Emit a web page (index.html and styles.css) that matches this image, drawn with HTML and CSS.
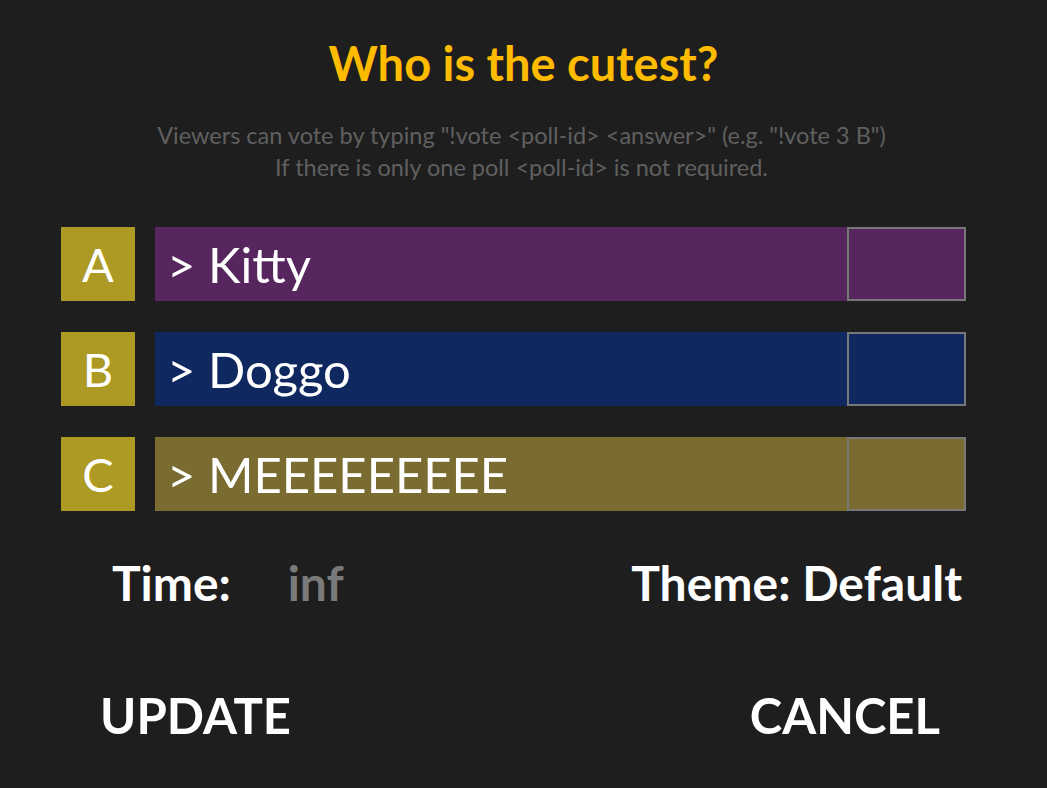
FILE: index.html
```html
<html>
<head>
    <title>Poll</title>
    <link rel="stylesheet" href="styles.css">
</head>
<body>
<div class="poll">
    <h1 class="title">Who is the cutest?</h1>
    <p class="hint">
        Viewers can vote by typing "!vote &lt;poll-id&gt; &lt;answer&gt;" (e.g. "!vote 3 B")
        <br>
        If there is only one poll &lt;poll-id&gt; is not required.
    </p>

    <div class="answers">
        <div class="answer">
            <div class="letter">A</div>
            <div class="bar purple">
                <span class="label">&gt; Kitty</span>
                <div class="votes"></div>
            </div>
        </div>
        <div class="answer">
            <div class="letter">B</div>
            <div class="bar navy">
                <span class="label">&gt; Doggo</span>
                <div class="votes"></div>
            </div>
        </div>
        <div class="answer">
            <div class="letter">C</div>
            <div class="bar olive">
                <span class="label">&gt; MEEEEEEEEE</span>
                <div class="votes"></div>
            </div>
        </div>
    </div>

    <div class="settings">
        <div class="time">
            <span>Time:</span>
            <span class="time-value">inf</span>
        </div>
        <div class="theme">Theme: Default</div>
    </div>

    <div class="buttons">
        <button id="update">UPDATE</button>
        <button id="cancel">CANCEL</button>
    </div>
</div>
</body>
</html>
```

FILE: styles.css
```css
body {
    margin: 0;
    background-color: #1e1e1e;
    font-family: Lato, 'Open Sans', sans-serif;
    color: #ffffff;
}
.poll {
    padding: 35px 81px 0 61px;
}
.title {
    margin: 0;
    font-size: 47px;
    font-weight: 700;
    line-height: 1.2;
    color: #ffbb00;
    text-align: center;
    padding-left: 20px;
}
.hint {
    margin: 28px 0 0 0;
    font-size: 23.5px;
    line-height: 32px;
    color: #606060;
    text-align: center;
    padding-left: 16px;
}
.answers {
    margin-top: 44px;
    display: flex;
    flex-direction: column;
    gap: 31px;
}
.answer {
    display: flex;
    gap: 20px;
    height: 74px;
}
.letter {
    width: 74px;
    height: 74px;
    background-color: #ad9a24;
    font-size: 47px;
    line-height: 74px;
    text-align: center;
}
.bar {
    flex: 1;
    display: flex;
    align-items: center;
}
.purple {
    background-color: #57265e;
}
.navy {
    background-color: #0f285f;
}
.olive {
    background-color: #7a6b31;
}
.label {
    flex: 1;
    padding-left: 12px;
    font-size: 49px;
}
.votes {
    width: 115px;
    height: 70px;
    border: 2px solid #787878;
}
.settings {
    margin-top: 43px;
    display: flex;
    justify-content: space-between;
    padding: 0 4px 0 51px;
    font-size: 48px;
    font-weight: 700;
    line-height: 1.2;
}
.time-value {
    color: #7a7a7a;
    margin-left: 45px;
}
.buttons {
    margin-top: 74px;
    display: flex;
    justify-content: space-between;
    padding: 0 26px 0 39px;
}
button {
    background: none;
    border: 0;
    padding: 0;
    color: #ffffff;
    font-family: Lato, 'Open Sans', sans-serif;
    font-size: 49px;
    font-weight: 700;
    line-height: 1.2;
    cursor: pointer;
}
```
